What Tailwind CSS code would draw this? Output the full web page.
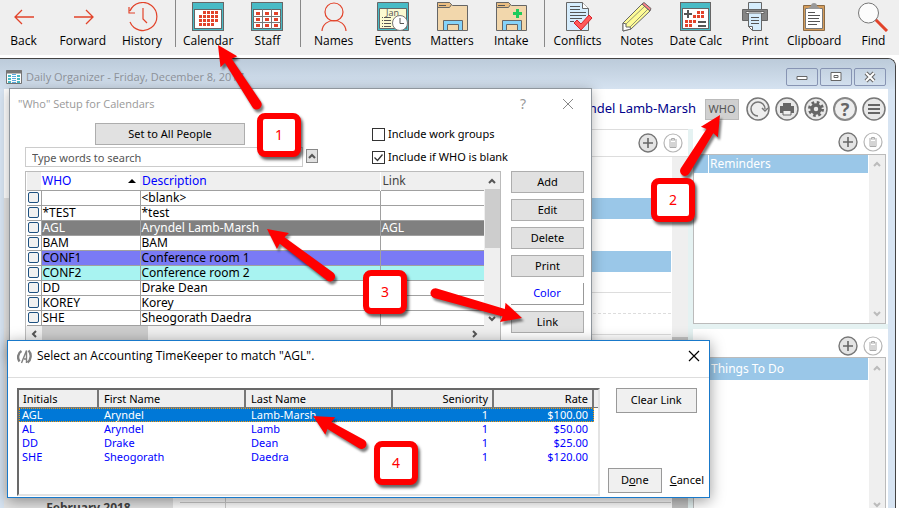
<!doctype html>
<html lang="en" class="h-full">
<head>
  <meta charset="utf-8">
  <meta name="viewport" content="width=device-width,initial-scale=1">
  <title>Daily Organizer</title>
  <script src="https://cdn.jsdelivr.net/npm/@tailwindcss/browser@4"></script>
</head>
<body class="relative h-screen overflow-hidden bg-white flex flex-col font-['Noto_Sans','Open_Sans',sans-serif] text-xs text-black">

  <!-- shared icons -->
  <svg class="hidden">
    <symbol id="plus" viewBox="0 0 20 20">
      <circle cx="10" cy="10" r="9" fill="#e4e4e4" stroke="#777" stroke-width="1.4"/>
      <path d="M10 5v10M5 10h10" stroke="#666" stroke-width="1.6"/>
    </symbol>
    <symbol id="trash" viewBox="0 0 20 20">
      <circle cx="10" cy="10" r="9" fill="#fff" stroke="#b5b5b5" stroke-width="1.2"/>
      <path d="M6 7h8M8.500 7V5.500h3V7M7 8v6.500h6V8M9 9v5M11 9v5" fill="none" stroke="#aaa"/>
    </symbol>
    <symbol id="up" viewBox="0 0 8 6"><path d="M1 5l3-3 3 3" fill="none" stroke="currentColor" stroke-width="2"/></symbol>
    <symbol id="down" viewBox="0 0 8 6"><path d="M1 1l3 3 3-3" fill="none" stroke="currentColor" stroke-width="2"/></symbol>
    <symbol id="folder" viewBox="0 0 32 30">
      <path d="M1.500.500h12l3 3h15v25h-30z" fill="#f2d7ac" stroke="#666"/>
      <path d="M1.500.500h12l2 2-2 3h-12z" fill="#e9bd82" stroke="#666"/>
      <path d="M3 3.500h7" stroke="#555"/>
      <path d="M7.500 28.500v-10h19v10h-4v-6h-11v6z" fill="#85d3fa" stroke="#666"/>
    </symbol>
  </svg>

  <!-- toolbar -->
  <nav class="h-[55px] shrink-0 overflow-hidden bg-[#efefef]">
    <div class="-ml-[6px] -mr-1 flex pt-[2px] font-['Open_Sans',sans-serif] text-xs leading-4">
      <button class="flex-1 basis-0 min-w-0 flex flex-col items-center gap-px whitespace-nowrap">
        <svg class="w-8 h-[30px]" viewBox="0 0 32 30" fill="none" stroke="#e2432a" stroke-width="1.3"><path d="M26 15H7M14 8l-7 7 7 7"/></svg>Back</button>
      <button class="flex-1 basis-0 min-w-0 flex flex-col items-center gap-px whitespace-nowrap">
        <svg class="w-8 h-[30px]" viewBox="0 0 32 30" fill="none" stroke="#e2432a" stroke-width="1.3"><path d="M7 15h19M19 8l7 7-7 7"/></svg>Forward</button>
      <button class="flex-1 basis-0 min-w-0 flex flex-col items-center gap-px whitespace-nowrap">
        <svg class="w-8 h-[30px]" viewBox="0 0 32 30" fill="none" stroke="#e2432a" stroke-width="1.2"><path d="M4 9A14 14 0 1 1 4 20M3 5v6h6M17 6v11l4 4"/></svg>History</button>
      <span class="w-[7px] h-[47px] -mt-[2px] flex justify-center"><span class="w-px bg-[#888]"></span></span>
      <button class="flex-1 basis-0 min-w-0 flex flex-col items-center gap-px whitespace-nowrap">
        <svg class="w-8 h-[30px]" viewBox="0 0 32 30" shape-rendering="crispEdges"><path d="M.5.500h31v28h-31z" fill="#48bbc6" stroke="#666"/><path d="M2.500 7.500h27v19h-27z" fill="#fff" stroke="#666"/><path d="M11 10.500h15M7 14.500h19M7 18.500h19M7 22.500h15" stroke="#e2432a" stroke-width="3" stroke-dasharray="3 1"/></svg>Calendar</button>
      <button class="flex-1 basis-0 min-w-0 flex flex-col items-center gap-px whitespace-nowrap">
        <svg class="w-8 h-[30px]" viewBox="0 0 32 30" shape-rendering="crispEdges"><path d="M.5.500h31v28h-31z" fill="#48bbc6" stroke="#666"/><path d="M2.500 7.500h27v19h-27z" fill="#fff" stroke="#666"/><path d="M11.500 7v20M20.500 7v20M2 14.500h28M2 20.500h28" stroke="#777"/><path d="M5 11.500h22M5 17.500h22M5 23.500h22" stroke="#e2432a" stroke-width="3" stroke-dasharray="4 5"/></svg>Staff</button>
      <span class="w-[7px] h-[47px] -mt-[2px] flex justify-center"><span class="w-px bg-[#888]"></span></span>
      <button class="flex-1 basis-0 min-w-0 flex flex-col items-center gap-px whitespace-nowrap">
        <svg class="w-8 h-[30px]" viewBox="0 0 32 30" fill="none" stroke="#e2432a" stroke-width="1.2"><circle cx="16" cy="10" r="9"/><path d="M4 29c1-14 23-14 24 0"/></svg>Names</button>
      <button class="flex-1 basis-0 min-w-0 flex flex-col items-center gap-px whitespace-nowrap">
        <svg class="w-8 h-[30px]" viewBox="0 0 32 30"><path d="M.5.500h31v28h-31z" fill="#48bbc6" stroke="#666"/><path d="M2.500 6.500h27v20h-27z" fill="#fbfad2" stroke="#666"/><text x="9" y="14" font-size="9" fill="#555">Jan</text><path d="M5 15.500h9M5 18.500h9M5 21.500h9M5 24.500h9" stroke="#555" stroke-dasharray="1 1 7 0"/><circle cx="23" cy="21" r="7.500" fill="#fff" stroke="#777"/><path d="M23 16v5.500h4" fill="none" stroke="#555"/></svg>Events</button>
      <button class="flex-1 basis-0 min-w-0 flex flex-col items-center gap-px whitespace-nowrap">
        <svg class="w-8 h-[30px]"><use href="#folder"/></svg>Matters</button>
      <button class="flex-1 basis-0 min-w-0 flex flex-col items-center gap-px whitespace-nowrap">
        <svg class="w-8 h-[30px]" viewBox="0 0 32 30"><use href="#folder" width="32" height="30"/><path d="M22.500 7v9M18 11.500h9" stroke="#1fcb5c" stroke-width="3"/></svg>Intake</button>
      <span class="w-[7px] h-[47px] -mt-[2px] flex justify-center"><span class="w-px bg-[#888]"></span></span>
      <button class="flex-1 basis-0 min-w-0 flex flex-col items-center gap-px whitespace-nowrap">
        <svg class="w-8 h-[30px]" viewBox="0 0 32 30"><path d="M5.500.500h16l6 6v22h-22z" fill="#d6edfd" stroke="#666"/><path d="M21.500.500v6h6" fill="#fff" stroke="#666"/><path d="M9 4.500h10M9 7.500h10M9 10.500h16M9 13.500h16M9 16.500h12M9 19.500h4" stroke="#555"/><path d="M13 21l3-3 4 4 8-9 3 3-11 12z" fill="#ff5a5a" stroke="#d8202a"/></svg>Conflicts</button>
      <button class="flex-1 basis-0 min-w-0 flex flex-col items-center gap-px whitespace-nowrap">
        <svg class="w-8 h-[30px]" viewBox="0 0 32 30" stroke="#666"><path d="M2 21L21 2l8 7-19 18-8 2z" fill="#fdfb96"/><path d="M21 2l2-1.500 7 6L29 9z" fill="#ff8087"/><path d="M2 21l3 1v3h4l1 2-8 2z" fill="#fff"/><path d="M5 22L24 4M9 25L27 7" stroke-width=".7"/></svg>Notes</button>
      <button class="flex-1 basis-0 min-w-0 flex flex-col items-center gap-px whitespace-nowrap">
        <svg class="w-8 h-[30px]" viewBox="0 0 32 30" shape-rendering="crispEdges"><path d="M.5.500h30v28h-30z" fill="#48bbc6" stroke="#666"/><path d="M2.500 6.500h26v20h-26z" fill="#fff" stroke="#666"/><path d="M8 8v8M4 12h8M18 20h8M18 24h8" stroke="#555" stroke-width="2"/><path d="M17 10.500h7M13 14.500h11M5 19.500h11M5 23.500h7" stroke="#e2432a" stroke-width="3" stroke-dasharray="3 1"/></svg>Date Calc</button>
      <button class="flex-1 basis-0 min-w-0 flex flex-col items-center gap-px whitespace-nowrap">
        <svg class="w-8 h-[30px]" viewBox="0 0 32 30"><path d="M9.500.500h13v8h-13z" fill="#d6edfd" stroke="#666"/><path d="M3.500 7.500h25v11h-25z" fill="#858585" stroke="#666"/><path d="M7 9.500h18v2H7z" fill="#fff" stroke="#666"/><path d="M9.500 11h13v17.500h-9l-4-4z" fill="#d6edfd" stroke="#666"/><path d="M12 15.500h8M12 18.500h8M12 21.500h8" stroke="#555"/><path d="M9.500 24.500h4v4z" fill="#fff" stroke="#666"/></svg>Print</button>
      <button class="flex-1 basis-0 min-w-0 flex flex-col items-center gap-px whitespace-nowrap">
        <svg class="w-8 h-[30px]" viewBox="0 0 32 30"><path d="M5.500 3.500h21v25h-21z" fill="#d59d5c" stroke="#8a6a45"/><path d="M7.500 6.500h17v20h-17z" fill="#fff" stroke="#777"/><path d="M9 7l4-3a3 3 0 0 1 6 0l4 3z" fill="#999"/><path d="M10 10.500h7M10 13.500h12M10 16.500h11M10 19.500h12M10 22.500h9" stroke="#555"/></svg>Clipboard</button>
      <button class="flex-1 basis-0 min-w-0 flex flex-col items-center gap-px whitespace-nowrap">
        <svg class="w-8 h-[30px]" viewBox="0 0 32 30"><path d="M18 17l12 12" stroke="#e2432a" stroke-width="3"/><circle cx="11.500" cy="11" r="10" fill="#fcfcfc" stroke="#777"/></svg>Find</button>
    </div>
  </nav>

  <!-- organizer window -->
  <main class="mt-[3px] mr-[3px] flex-1 min-h-0 flex flex-col border-t border-r border-[#444] rounded-tr-lg bg-[#d7e4f2] overflow-hidden">
    <header class="h-[30px] shrink-0 pl-[6px] pr-[9px] pt-[6px] flex items-center gap-1 bg-linear-to-b from-[#bccbda] to-[#d5e2f0] text-[#8d9299]">
      <svg class="size-4" viewBox="0 0 16 16"><path d="M.5 1.500h15v13H.5z" fill="#fff" stroke="#777"/><path d="M0 3h16" stroke="#777" stroke-width="3"/><path d="M3.500 6v8M12.500 6v8" stroke="#48bbc6" stroke-width="3" stroke-dasharray="2 1"/><path d="M8 5v9" stroke="#5aa9e0" stroke-width="4" stroke-dasharray="1 1"/></svg>
      <h1 class="flex-1 font-['Open_Sans',sans-serif] text-[11px] whitespace-nowrap">Daily Organizer - Friday, December 8, 2017</h1>
      <div class="flex gap-[2px]">
        <button aria-label="Minimize" class="w-8 h-[18px] border border-[#8794b3] rounded-xs flex items-center justify-center"><svg class="size-3" viewBox="0 0 12 12"><path d="M1 5.500h10v3H1z" fill="#fff" stroke="#666"/></svg></button>
        <button aria-label="Restore" class="w-8 h-[18px] border border-[#8794b3] rounded-xs flex items-center justify-center"><svg class="size-3" viewBox="0 0 12 12"><path d="M1 1.500h10v8H1z" fill="#fff" stroke="#666"/><path d="M4 4.500h4v2H4z" fill="none" stroke="#666"/></svg></button>
        <button aria-label="Close" class="w-8 h-[18px] border border-[#8794b3] rounded-xs flex items-center justify-center"><svg class="size-3" viewBox="0 0 12 12"><path d="M2 2l8 8M10 2l-8 8" stroke="#666" stroke-width="4"/><path d="M2 2l8 8M10 2l-8 8" stroke="#fff" stroke-width="2"/></svg></button>
      </div>
    </header>

    <div class="ml-1 mr-[7px] flex-1 min-h-0 flex bg-white">
      <aside class="w-[169px] shrink-0 pt-[109px] flex">
        <div class="flex-1 bg-[#e4e4e4] pt-[302px] text-center font-bold leading-4 text-[#444]">February 2018</div>
      </aside>

      <div class="flex-1 min-w-0 flex flex-col">
        <div class="h-10 shrink-0 flex items-center justify-end gap-[5px] pr-[2px]">
          <span class="mr-1 text-[13px] text-[#00008b]">Aryndel Lamb-Marsh</span>
          <button class="mr-[2px] w-[34px] h-[21px] border border-[#bbb] bg-[#d0d0d0] text-[11px] text-[#555]">WHO</button>
          <button aria-label="Refresh"><svg class="size-6" viewBox="0 0 24 24" fill="none"><circle cx="12" cy="12" r="11" fill="#eee" stroke="#777" stroke-width="1.500"/><path d="M12 19a7 7 0 1 1 7-7M16 11l3 3 3-3" stroke="#777" stroke-width="1.500"/></svg></button>
          <button aria-label="Print"><svg class="size-6" viewBox="0 0 24 24"><circle cx="12" cy="12" r="11" fill="#e8e8e8" stroke="#777" stroke-width="1.500"/><path d="M8 6h8v3H8zM5 9h14v7H5z" fill="#666"/><path d="M8 13.500h8V18H8z" fill="#eee" stroke="#666"/></svg></button>
          <button aria-label="Settings"><svg class="size-6" viewBox="0 0 24 24" fill="none"><circle cx="12" cy="12" r="11" fill="#e8e8e8" stroke="#777" stroke-width="1.500"/><circle cx="12" cy="12" r="6.500" stroke="#666" stroke-width="3" stroke-dasharray="2.600 2.500"/><circle cx="12" cy="12" r="4" stroke="#666" stroke-width="3.500"/></svg></button>
          <button aria-label="Help" class="size-6 rounded-full border-2 border-[#888] bg-[#eee] text-lg leading-5 font-bold text-[#666]">?</button>
          <button aria-label="Menu"><svg class="size-6" viewBox="0 0 24 24"><circle cx="12" cy="12" r="11" fill="#e8e8e8" stroke="#777" stroke-width="1.500"/><path d="M6 8h12M6 12h12M6 16h12" stroke="#666" stroke-width="2"/></svg></button>
        </div>

        <div class="flex-1 min-h-0 flex">
          <!-- day schedule -->
          <section class="flex-1 min-w-0 flex flex-col">
            <div class="h-7 shrink-0 border-y border-[#ddd] flex items-center justify-end gap-[5px] pr-[5px]">
              <button aria-label="Add event"><svg class="size-5"><use href="#plus"/></svg></button>
              <button aria-label="Delete event"><svg class="size-5"><use href="#trash"/></svg></button>
            </div>
            <div class="flex-1 min-h-0 flex">
              <div class="flex-1 pt-[41px]">
                <div class="h-[21px] bg-[#9ac7e8]"></div>
                <div class="h-8"></div>
                <div class="h-[21px] bg-[#9ac7e8]"></div>
                <div class="h-[21px] border-b border-[#ddd]"></div>
                <div class="h-[21px] border-b border-dashed border-[#ddd]"></div>
                <div class="h-[21px] border-b border-[#ddd]"></div>
                <div class="ml-[7px] flex flex-col">
                  <div class="h-[168px] pl-[45px] border-b border-[#ccc] flex"><div class="border-l border-[#ccc]"></div></div>
                  <div class="h-4 pl-[45px] flex"><div class="border-l border-[#ccc]"></div></div>
                </div>
              </div>
              <div class="ml-px w-4 bg-[#efefef] pt-[180px] flex"><div class="flex-1 bg-[#c4c4c4]"></div></div>
            </div>
          </section>

          <!-- side lists -->
          <section class="w-[200px] shrink-0 border-l-[5px] border-[#e5f2f2] flex flex-col">
            <div class="h-[25px] shrink-0 flex items-center justify-end gap-[5px] pr-[5px]">
              <button aria-label="Add reminder"><svg class="size-5"><use href="#plus"/></svg></button>
              <button aria-label="Delete reminder"><svg class="size-5"><use href="#trash"/></svg></button>
            </div>
            <div class="h-[170px] shrink-0 mr-[2px] border border-[#bbb] flex">
              <h2 class="flex-1 h-[18px] pl-[14px] bg-[#9ac7e8] text-white leading-[18px] flex"><span class="border-l border-white pl-px">Reminders</span></h2>
              <div class="ml-px w-4 bg-[#efefef] flex flex-col items-center justify-between py-[6px] text-[#bbb]">
                <svg class="w-2 h-[6px]"><use href="#up"/></svg><svg class="w-2 h-[6px]"><use href="#down"/></svg>
              </div>
            </div>
            <div class="h-[5px] shrink-0 bg-[#e5f2f2]"></div>
            <div class="h-[28px] shrink-0 flex items-center justify-end gap-[5px] pr-[5px] pt-[6px]">
              <button aria-label="Add task"><svg class="size-5"><use href="#plus"/></svg></button>
              <button aria-label="Delete task"><svg class="size-5"><use href="#trash"/></svg></button>
            </div>
            <div class="flex-1 mr-[2px] border border-b-0 border-[#bbb] flex">
              <h2 class="flex-1 h-[22px] pl-[17px] bg-[#9ac7e8] text-white leading-[22px]">Things To Do</h2>
              <div class="ml-px w-4 bg-[#efefef] flex flex-col items-center justify-between pt-[7px] text-[#bbb]">
                <svg class="w-2 h-[6px]"><use href="#up"/></svg><svg class="w-2 h-[6px]"><use href="#down"/></svg>
              </div>
            </div>
          </section>
        </div>
      </div>
    </div>
  </main>

  <!-- "Who" setup dialog -->
  <section class="absolute left-[9px] top-[88px] w-[583px] h-[270px] bg-white border border-[#8f969d] shadow-[0_2px_12px_rgba(0,0,0,.3)]">
    <header class="h-[30px] pl-2 pr-[17px] flex items-center text-[#999]">
      <h2 class="flex-1 font-['Open_Sans',sans-serif] text-[11px]">"Who" Setup for Calendars</h2>
      <button class="mr-9 text-sm">?</button>
      <button aria-label="Close"><svg class="size-3" viewBox="0 0 12 12"><path d="M1 1l10 10M11 1L1 11" stroke="#888"/></svg></button>
    </header>

    <div class="flex pl-[15px] pt-1 text-[11px]">
      <div class="w-[347px] flex flex-col gap-[2px]">
        <button class="ml-[70px] w-[150px] h-[22px] border border-[#adadad] bg-[#e1e1e1]">Set to All People</button>
        <div class="flex gap-[3px]">
          <input aria-label="Search" placeholder="Type words to search" class="w-[278px] h-5 border border-[#ccc] px-[6px] placeholder:text-[#555]">
          <button aria-label="Collapse" class="mt-[2px] w-3 h-[14px] border border-[#888] bg-[#e1e1e1] flex items-center justify-center text-[#555]"><svg class="w-2 h-[6px]"><use href="#up"/></svg></button>
        </div>
      </div>
      <div class="flex flex-col gap-[7px] pt-[3px] leading-4">
        <label class="flex items-center gap-[3px]"><input type="checkbox" class="appearance-none size-[13px] border border-[#333] bg-white">Include work groups</label>
        <label class="flex items-center gap-[3px]"><span class="relative flex"><input type="checkbox" checked class="appearance-none size-[13px] border border-[#333] bg-white"><svg class="absolute inset-0 size-[13px]" viewBox="0 0 13 13"><path d="M2.500 6.500l3 3 5-6" fill="none" stroke="#333" stroke-width="1.300"/></svg></span>Include if WHO is blank</label>
      </div>
    </div>

    <div class="flex gap-[10px] pl-[15px] pt-1">
      <div class="w-[476px] border border-b-0 border-[#bbb]">
        <div class="flex">
          <table class="flex-1 table-fixed border-collapse leading-[14px] text-left text-xs ml-px">
            <colgroup><col class="w-[14px]"><col class="w-[99px]"><col class="w-[240px]"><col></colgroup>
            <thead>
              <tr class="h-[18px] bg-[#efefef] text-[#00f] border-b border-[#a0a0a0]">
                <th></th>
                <th class="font-normal bg-white p-0 pl-px"><div class="flex items-center justify-between pr-1">WHO<svg class="w-2 h-1" viewBox="0 0 8 4"><path d="M0 4l4-4 4 4z"/></svg></div></th>
                <th class="font-normal p-0 pl-[2px]">Description</th>
                <th class="font-normal text-[#444] p-0 pl-[2px] border-l border-white">Link</th>
              </tr>
            </thead>
            <tbody id="people"></tbody>
          </table>
          <div class="w-4 bg-[#efefef] flex flex-col items-center pt-[6px] text-[#555]">
            <svg class="w-2 h-[6px]"><use href="#up"/></svg>
            <div class="mt-[5px] w-[15px] h-[59px] bg-[#cdcdcd]"></div>
            <svg class="mt-auto mb-1 w-2 h-[6px]"><use href="#down"/></svg>
          </div>
        </div>
        <div class="h-4 bg-[#efefef] flex items-center pl-[5px] pr-[22px] text-[#555]">
          <svg class="w-[6px] h-2" viewBox="0 0 6 8"><path d="M5 1L2 4l3 3" fill="none" stroke="currentColor" stroke-width="2"/></svg>
          <div class="ml-[5px] h-4 w-[106px] bg-[#cdcdcd]"></div>
          <svg class="ml-auto w-[6px] h-2" viewBox="0 0 6 8"><path d="M1 1l3 3-3 3" fill="none" stroke="currentColor" stroke-width="2"/></svg>
        </div>
      </div>
      <div class="w-[73px] flex flex-col gap-[6px] text-[11px]">
        <button class="h-[22px] border border-[#adadad] bg-[#e1e1e1]">Add</button>
        <button class="h-[22px] border border-[#adadad] bg-[#e1e1e1]">Edit</button>
        <button class="h-[22px] border border-[#adadad] bg-[#e1e1e1]">Delete</button>
        <button class="h-[22px] border border-[#adadad] bg-[#e1e1e1]">Print</button>
        <button class="h-[22px] border-r border-b border-[#999] text-[#00f]">Color</button>
        <button class="h-[22px] border border-[#adadad] bg-[#e1e1e1]">Link</button>
      </div>
    </div>
  </section>

  <!-- timekeeper dialog -->
  <section class="absolute left-[7px] top-[340px] w-[703px] h-[158px] bg-white border border-[#1979ca] shadow-[0_3px_14px_rgba(0,0,0,.4)] text-[11px]">
    <header class="h-[37px] pl-[9px] pr-[9px] pb-[6px] flex items-center gap-[5px] border-b border-[#ddd]">
      <svg class="size-[15px]" viewBox="0 0 15 15" fill="none" stroke="#808080"><path d="M4.500 2C1 4 0 9 2.500 12.500" stroke-width="2.400"/><path d="M11.500 1.500C15 5 14 11 10.500 13.500" stroke-width="2.400"/><path d="M4.500 14L9.500 1.500V14M7 10h2.500" stroke-width="1.400"/></svg>
      <h2 class="flex-1 font-['Open_Sans',sans-serif] text-xs">Select an Accounting TimeKeeper to match "AGL".</h2>
      <button aria-label="Close"><svg class="size-3" viewBox="0 0 12 12"><path d="M1 1l10 10M11 1L1 11" stroke="#000" stroke-width="1.200"/></svg></button>
    </header>
    <div class="flex pl-[9px] pt-[10px]">
      <div class="w-[584px] h-[108px] border-2 border-[#e3e3e3] border-t-[#696969] border-l-[#696969] overflow-hidden">
        <div class="flex">
          <table class="w-[575px] table-fixed border-separate border-spacing-0 leading-[14px] text-left text-[#00f]">
            <colgroup><col class="w-[80px]"><col class="w-[147px]"><col class="w-[147px]"><col class="w-[101px]"><col class="w-[100px]"></colgroup>
            <thead>
              <tr class="h-[18px] bg-[#efefef] text-black">
                <th class="font-normal p-0 pl-1 border-r-2 border-b border-[#777]">Initials</th>
                <th class="font-normal p-0 pl-[5px] border-r-2 border-b border-[#777]">First Name</th>
                <th class="font-normal p-0 pl-[5px] border-r-2 border-b border-[#777]">Last Name</th>
                <th class="font-normal p-0 pr-1 text-right border-r-2 border-b border-[#777]">Seniority</th>
                <th class="font-normal p-0 pr-1 text-right border-r-2 border-b border-[#777]">Rate</th>
              </tr>
            </thead>
            <tbody id="keepers"></tbody>
          </table>
          <div class="flex-1 h-[18px] bg-[#efefef] border-b border-[#777]"></div>
        </div>
      </div>
      <div class="flex-1 flex flex-col justify-between pl-2 pr-[5px] pb-[3px]">
        <button class="ml-2 w-[81px] h-[25px] border border-[#999] bg-[#f0f0f0]">Clear Link</button>
        <div class="flex items-center gap-2">
          <button class="w-[54px] h-[25px] border border-[#999] bg-[#f0f0f0]">D<u>o</u>ne</button>
          <button><u>C</u>ancel</button>
        </div>
      </div>
    </div>
  </section>

  <!-- step callouts -->
  <svg class="absolute inset-0 w-full h-full pointer-events-none drop-shadow-[2px_3px_1px_rgba(0,0,0,.5)]" fill="#f00">
    <path transform="translate(218 45) rotate(57)" d="M0 0l20-10-1 6L71-5a5 5 0 0 1 0 10L19 4l1 6z"/>
    <path transform="translate(720 115) rotate(122)" d="M0 0l20-10-1 6L66-5a5 5 0 0 1 0 10L19 4l1 6z"/>
    <path transform="translate(267 229) rotate(37)" d="M0 0l20-10-1 6L79-5a5 5 0 0 1 0 10L19 4l1 6z"/>
    <path transform="translate(522 318) rotate(196)" d="M0 0l20-10-1 6L90-5a5 5 0 0 1 0 10L19 4l1 6z"/>
    <path transform="translate(313 416) rotate(30)" d="M0 0l20-10-1 6L56-5a5 5 0 0 1 0 10L19 4l1 6z"/>
  </svg>
  <div class="absolute left-[257px] top-[113px] size-11 rounded-lg border-6 border-[#f00] bg-white shadow-[2px_3px_3px_rgba(0,0,0,.6)] flex items-center justify-center text-sm text-[#f00]">1</div>
  <div class="absolute left-[651px] top-[178px] size-11 rounded-lg border-6 border-[#f00] bg-white shadow-[2px_3px_3px_rgba(0,0,0,.6)] flex items-center justify-center text-sm text-[#f00]">2</div>
  <div class="absolute left-[363px] top-[270px] size-11 rounded-lg border-6 border-[#f00] bg-white shadow-[2px_3px_3px_rgba(0,0,0,.6)] flex items-center justify-center text-sm text-[#f00]">3</div>
  <div class="absolute left-[374px] top-[441px] size-11 rounded-lg border-6 border-[#f00] bg-white shadow-[2px_3px_3px_rgba(0,0,0,.6)] flex items-center justify-center text-sm text-[#f00]">4</div>

  <script>
    const people = [
      ['', '<blank>', '', ''],
      ['*TEST', '*test', '', ''],
      ['AGL', 'Aryndel Lamb-Marsh', 'AGL', 'bg-[#808080] text-white'],
      ['BAM', 'BAM', '', ''],
      ['CONF1', 'Conference room 1', '', 'bg-[#7a7af5]'],
      ['CONF2', 'Conference room 2', '', 'bg-[#a8f3f1]'],
      ['DD', 'Drake Dean', '', ''],
      ['KOREY', 'Korey', '', ''],
      ['SHE', 'Sheogorath Daedra', '', '']
    ];
    const keepers = [
      ['AGL', 'Aryndel', 'Lamb-Marsh', 1, '$100.00'],
      ['AL', 'Aryndel', 'Lamb', 1, '$50.00'],
      ['DD', 'Drake', 'Dean', 1, '$25.00'],
      ['SHE', 'Sheogorath', 'Daedra', 1, '$120.00']
    ];

    const esc = s => s.replace('<', '&lt;');

    document.getElementById('people').innerHTML = people.map(([who, desc, link, color]) => `
      <tr class="h-[15px] border-b border-[#a0a0a0] ${color}">
        <td class="p-0 bg-white"><input type="checkbox" aria-label="${who || 'blank'}" class="block mx-auto appearance-none size-[11px] border border-[#1d5080] rounded-xs bg-[#f1f1f1]"></td>
        <td class="p-0 pl-px border-l border-[#a0a0a0]">${who}</td>
        <td class="p-0 pl-px border-l border-[#a0a0a0]">${esc(desc)}</td>
        <td class="p-0 pl-px border-l border-[#a0a0a0]">${link}</td>
      </tr>`).join('');

    document.getElementById('keepers').innerHTML = keepers.map(([ini, first, last, sen, rate], i) => `
      <tr class="${i === 0 ? 'bg-[#0078d7] text-white outline-1 -outline-offset-1 outline-dotted outline-[#f90]' : ''}">
        <td class="p-0 pl-[3px]">${ini}</td>
        <td class="p-0 pl-[5px]">${first}</td>
        <td class="p-0 pl-[5px]">${last}</td>
        <td class="p-0 pr-[6px] text-right">${sen}</td>
        <td class="p-0 pr-[6px] text-right">${rate}</td>
      </tr>`).join('');
  </script>
</body>
</html>
